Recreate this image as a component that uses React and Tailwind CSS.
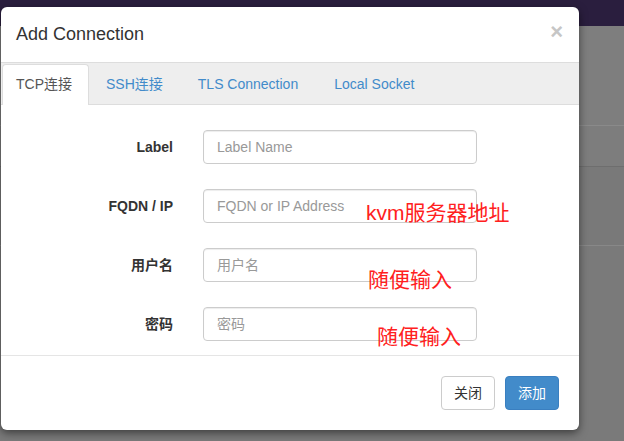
import React from "react";

const font = { fontFamily: '"Liberation Sans", Arial, "Noto Sans CJK SC", sans-serif' };

function Row({ label, placeholder }) {
  return (
    <div className="flex items-center h-[34px]">
      <div className="w-[172px] text-right text-[14px] font-bold text-[#333]">{label}</div>
      <div className="ml-[30px] w-[274px] h-[34px] border border-[#ccc] rounded-[4px] bg-white flex items-center pl-[13px] text-[14px] text-[#999] shadow-[inset_0_1px_1px_rgba(0,0,0,0.075)]">
        {placeholder}
      </div>
    </div>
  );
}

export default function App() {
  const tabs = ["SSH连接", "TLS Connection", "Local Socket"];
  return (
    <div className="relative w-[624px] h-[441px] overflow-hidden bg-[#7c7c7c]" style={font}>
      {/* background page */}
      <div className="flex flex-col w-full h-full">
        <div className="h-[26px] bg-[#2a1e3e]" />
        <div className="h-[99px] bg-[#7e7e7e]" />
        <div className="h-px bg-[#8a8a8a]" />
        <div className="h-[40px] bg-[#7d7d7d]" />
        <div className="h-px bg-[#6e6e6e]" />
        <div className="h-[78px] bg-[#797979]" />
        <div className="h-px bg-[#888]" />
        <div className="flex-1 bg-[#7a7a7a]" />
      </div>

      {/* modal */}
      <div className="absolute left-[1px] top-[7px] w-[578px] h-[423px] bg-white rounded-[6px] shadow-[0_3px_9px_rgba(0,0,0,0.5)] flex flex-col overflow-hidden">
        <div className="h-[55px] flex items-center justify-between pl-[15px] pr-[16px]">
          <div className="text-[18px] text-[#333] mt-[-1px]">Add Connection</div>
          <div className="text-[22px] font-bold text-[#c6c6c6] leading-none mt-[-5px]">×</div>
        </div>
        <div className="h-[43px] bg-[#eee] border-t border-b border-[#ddd] flex items-end pl-[1px]">
          <div className="h-[41px] pl-[13px] pr-[16px] flex items-center bg-white border border-b-0 border-[#ddd] rounded-t-[4px] text-[14px] text-[#555] mb-[-1px] pb-px">
            TCP连接
          </div>
          <div className="ml-[1px] h-[41px] pl-[16px] pr-[17px] flex items-center text-[14px] text-[#428bca] mb-[-1px] pb-px">
            {tabs[0]}
          </div>
          <div className="ml-[1px] h-[41px] pl-[17px] pr-[17px] flex items-center text-[14px] text-[#428bca] mb-[-1px] pb-px">
            {tabs[1]}
          </div>
          <div className="ml-[1px] h-[41px] pl-[18px] pr-[16px] flex items-center text-[14px] text-[#428bca] mb-[-1px] pb-px">
            {tabs[2]}
          </div>
        </div>
        <div className="pt-[25px] flex flex-col gap-[25px] pb-[14px] border-b border-[#e5e5e5]">
          <Row label="Label" placeholder="Label Name" />
          <Row label="FQDN / IP" placeholder="FQDN or IP Address" />
          <Row label="用户名" placeholder="用户名" />
          <Row label="密码" placeholder="密码" />
        </div>
        <div className="flex-1 flex justify-end items-start pt-[20px] pr-[20px] gap-[10px]">
          <div className="w-[54px] h-[34px] border border-[#ccc] rounded-[4px] flex items-center justify-center text-[14px] text-[#333] bg-white">
            关闭
          </div>
          <div className="w-[54px] h-[34px] border border-[#3a7fc0] rounded-[4px] flex items-center justify-center text-[14px] text-white bg-[#428bca]">
            添加
          </div>
        </div>
      </div>

      {/* red annotations */}
      <div className="absolute left-[366px] top-[202px] text-[21px] leading-none text-[#ff2020]">kvm服务器地址</div>
      <div className="absolute left-[368px] top-[269px] text-[21px] leading-none text-[#ff2020]">随便输入</div>
      <div className="absolute left-[377px] top-[326px] text-[21px] leading-none text-[#ff2020]">随便输入</div>
    </div>
  );
}
